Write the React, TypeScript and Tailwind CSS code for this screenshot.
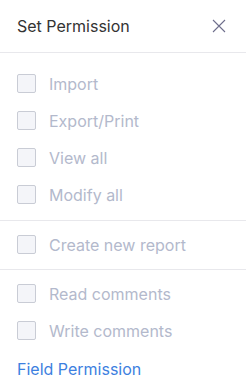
import React from 'react';

const font = { fontFamily: 'Inter, "Open Sans", sans-serif' };

function Row({ label }: { label: string }) {
  return (
    <label className="flex h-[37px] items-center gap-[13px] px-[17px]">
      <span className="h-[19px] w-[19px] shrink-0 rounded-[2px] border border-[#c9ccd5] bg-[#f4f5f9]"></span>
      <span className="text-[16px] text-[#b3b9cc]">{label}</span>
    </label>
  );
}

export default function App() {
  return (
    <div className="h-[384px] w-[246px] overflow-hidden bg-white" style={font}>
      {/* Header */}
      <div className="flex h-[53px] items-center justify-between border-b border-[#e8e8ec] pl-[17px] pr-[20px]">
        <span className="text-[16px] text-[#333333]">Set Permission</span>
        <svg width="14" height="14" viewBox="0 0 14 14" className="text-[#6e6e8c]">
          <path d="M1 1 L13 13 M13 1 L1 13" stroke="currentColor" strokeWidth="1.1" />
        </svg>
      </div>

      {/* Permissions */}
      <div className="border-b border-[#e8e8ec] pt-[12px] pb-[7px]">
        <Row label="Import" />
        <Row label="Export/Print" />
        <Row label="View all" />
        <Row label="Modify all" />
      </div>
      <div className="border-b border-[#e8e8ec] pt-[5px] pb-[6px]">
        <Row label="Create new report" />
      </div>
      <div className="pt-[5px]">
        <Row label="Read comments" />
        <Row label="Write comments" />
        <div className="flex h-[37px] items-center px-[17px] pt-[2px]">
          <span className="text-[16px] text-[#3d7fe0]">Field Permission</span>
        </div>
      </div>
    </div>
  );
}
